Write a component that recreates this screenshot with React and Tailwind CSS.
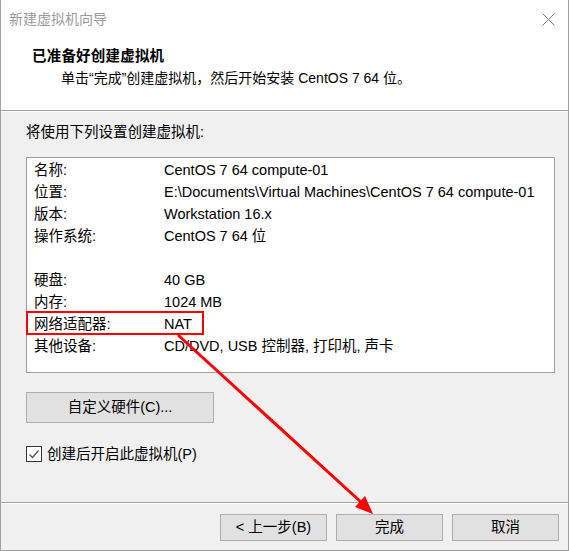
import React from 'react';

const rows = [
  ['名称:', 'CentOS 7 64 compute-01'],
  ['位置:', 'E:\\Documents\\Virtual Machines\\CentOS 7 64 compute-01'],
  ['版本:', 'Workstation 16.x'],
  ['操作系统:', 'CentOS 7 64 位'],
  ['', ''],
  ['硬盘:', '40 GB'],
  ['内存:', '1024 MB'],
  ['网络适配器:', 'NAT'],
  ['其他设备:', 'CD/DVD, USB 控制器, 打印机, 声卡'],
];

const WinButton = ({ children, className = '' }) => (
  <button
    className={`flex items-center justify-center bg-[#e1e1e1] border border-[#adadad] text-black leading-none ${className}`}
  >
    {children}
  </button>
);

const Annotation = () => (
  <svg className="absolute left-0 top-0 pointer-events-none" width="570" height="551">
    <rect x="27" y="312" width="176" height="22" fill="none" stroke="#ff0000" strokeWidth="2" />
    <line x1="178" y1="335" x2="362" y2="503" stroke="#ff0000" strokeWidth="3" />
    <polygon points="373,514 355,507 365,496" fill="#ff0000" />
  </svg>
);

export default function App() {
  return (
    <div
      className="relative w-[570px] h-[551px] bg-white text-[14.5px] text-black"
      style={{ fontFamily: '"Liberation Sans", "Noto Sans CJK SC", sans-serif' }}
    >
      <div className="w-[569px] h-[551px] border-x border-b border-[#a0a0a0] flex flex-col">
        {/* Header */}
        <div className="h-[110px] bg-white">
          <div className="h-[38px] flex items-center justify-between pl-[8px] pr-[13px]">
            <span className="text-[14px] text-[#9a9a9a] leading-5">新建虚拟机向导</span>
            <svg width="13" height="13" viewBox="0 0 13 13">
              <path d="M0.5 0.5L12.5 12.5M12.5 0.5L0.5 12.5" stroke="#7a7a7a" strokeWidth="1" />
            </svg>
          </div>
          <div className="pl-[31px] pt-[8px]">
            <div className="font-bold leading-5 tracking-[0.2px]">已准备好创建虚拟机</div>
            <div className="pl-[29px] mt-[2px] leading-5 text-[14px]">
              单击“完成”创建虚拟机，然后开始安装 CentOS 7 64 位。
            </div>
          </div>
        </div>
        <div className="h-px bg-[#a0a0a0]" />
        <div className="h-px bg-white" />

        {/* Body */}
        <div className="h-[390px] bg-[#f0f0f0] pl-[25px] pt-[10px] flex flex-col">
          <div className="leading-5">将使用下列设置创建虚拟机:</div>
          <div className="mt-[15px] w-[529px] h-[216px] bg-white border border-[#a0a0a0] pt-[2px] pl-[7px]">
            {rows.map(([k, v], i) => (
              <div key={i} className="flex h-[22px] items-center">
                <span className="w-[130px]">{k}</span>
                <span>{v}</span>
              </div>
            ))}
          </div>
          <WinButton className="mt-[19px] w-[188px] h-[31px]">自定义硬件(C)...</WinButton>
          <label className="mt-[21px] flex items-center gap-[5px]">
            <span className="w-4 h-4 border border-[#333] bg-white flex items-center justify-center">
              <svg width="12" height="12" viewBox="0 0 12 12">
                <path d="M1.5 6.5L4.5 9.5L10.5 2.5" fill="none" stroke="#555" strokeWidth="1.3" />
              </svg>
            </span>
            <span className="leading-5">创建后开启此虚拟机(P)</span>
          </label>
        </div>
        <div className="h-px bg-[#a0a0a0]" />
        <div className="h-px bg-white" />

        {/* Footer */}
        <div className="h-[46px] bg-[#f0f0f0] pt-[10px] pr-[9px] flex justify-end gap-[9px]">
          <WinButton className="w-[107px] h-[27px]">&lt; 上一步(B)</WinButton>
          <WinButton className="w-[107px] h-[27px]">完成</WinButton>
          <WinButton className="w-[107px] h-[27px]">取消</WinButton>
        </div>
      </div>
      <Annotation />
    </div>
  );
}
